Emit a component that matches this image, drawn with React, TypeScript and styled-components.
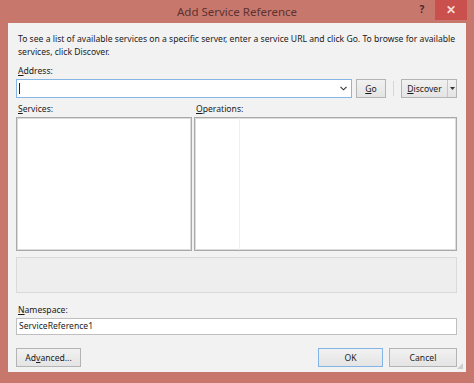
import { ReactElement } from 'react'
import styled, { createGlobalStyle } from 'styled-components'

const Global = createGlobalStyle`
  html, body {
    margin: 0;
    padding: 0;
  }
  body {
    font-family: 'Noto Sans', 'Open Sans', sans-serif;
  }
`

const Window = styled.div`
  width: 474px;
  height: 383px;
  box-sizing: border-box;
  background-color: #c8776d;
  display: flex;
  flex-direction: column;
  padding: 0 8px 11px;
`

const TitleBar = styled.header`
  height: 23px;
  display: grid;
  grid-template-columns: 1fr auto 1fr;
  align-items: start;
`

const Title = styled.div`
  grid-column: 2;
  font-size: 11.5px;
  line-height: 23px;
  color: #5b3430;
`

const Controls = styled.div`
  grid-column: 3;
  justify-self: end;
  display: flex;
  align-items: flex-start;
  margin-right: -1px;
`

const HelpButton = styled.div`
  width: 26px;
  height: 18px;
  font-size: 10px;
  font-weight: bold;
  line-height: 18px;
  text-align: center;
  color: #4a2a26;
`

const CloseButton = styled.div`
  width: 32px;
  height: 20px;
  background-color: #c9504d;
  color: #f6dada;
  font-size: 12px;
  font-weight: bold;
  line-height: 19px;
  text-align: center;
`

const BodyWrap = styled.div`
  position: relative;
  flex: 1;
  display: flex;
  flex-direction: column;
`

const Body = styled.main`
  flex: 1;
  background-color: #f2f2f2;
  display: flex;
  flex-direction: column;
  padding: 0 9px 0 8px;
  font-size: 8.6px;
  color: #1a1a1a;
`

const Intro = styled.p`
  margin: 10px 0 0 2px;
  line-height: 12.5px;
`

const Label = styled.div<{ $top: number }>`
  margin: ${({ $top }) => $top}px 0 0 2px;
  height: 11px;
  line-height: 11px;
`

const AddressRow = styled.div`
  margin-top: 2px;
  height: 19px;
  display: flex;
  align-items: stretch;
`

const Combo = styled.div`
  flex: 1;
  box-sizing: border-box;
  border: 1px solid #86b6e6;
  background: #fff;
  display: flex;
  align-items: center;
  justify-content: space-between;
  padding: 0 4px 0 2px;
`

const Caret = styled.span`
  width: 1px;
  height: 11px;
  background: #222;
`

const Chevron = styled.svg`
  width: 7px;
  height: 5px;
`

const Button = styled.div<{ $width: number; $focused?: boolean }>`
  width: ${({ $width }) => $width}px;
  box-sizing: border-box;
  border: 1px solid ${({ $focused }) => ($focused ? '#82b4e6' : '#b4b4b4')};
  background: linear-gradient(#f1f1f1, #e4e4e4);
  display: flex;
  align-items: center;
  justify-content: center;
`

const GoButton = styled(Button)`
  margin-left: 4px;
`

const Separator = styled.div`
  width: 1px;
  margin: 2px 7px;
  background: #d6d6d6;
`

const SplitButton = styled.div`
  width: 56px;
  box-sizing: border-box;
  border: 1px solid #b4b4b4;
  background: linear-gradient(#f1f1f1, #e4e4e4);
  display: flex;
`

const SplitMain = styled.div`
  flex: 1;
  display: flex;
  align-items: center;
  justify-content: center;
  border-right: 1px solid #c6c6c6;
`

const SplitArrow = styled.div`
  width: 8px;
  display: flex;
  align-items: center;
  justify-content: center;
`

const LabelRow = styled.div`
  display: grid;
  grid-template-columns: 178px 1fr;
  margin: 6px 0 0 2px;
  height: 11px;
  line-height: 11px;
`

const Lists = styled.div`
  margin-top: 2px;
  height: 134px;
  display: grid;
  grid-template-columns: 176px 1fr;
  gap: 2px;
`

const ListBox = styled.div`
  box-sizing: border-box;
  border: 1px solid #a9a9a9;
  box-shadow: inset 0 0 0 1px #dcdcdc;
  background: #fff;
  height: 100%;
`

const OpsBox = styled(ListBox)`
  display: grid;
  grid-template-columns: 45px 1fr;
`

const OpsDivider = styled.div`
  border-right: 1px solid #f0f0f0;
`

const Status = styled.div`
  margin-top: 6px;
  height: 36px;
  box-sizing: border-box;
  border: 1px solid #dadada;
  background: #eeeeee;
`

const TextBox = styled.div`
  margin-top: 2px;
  height: 17px;
  box-sizing: border-box;
  border: 1px solid #bfbfbf;
  background: #fff;
  padding-left: 2px;
  line-height: 15px;
`

const Footer = styled.div`
  margin-top: 13px;
  height: 19px;
  display: flex;
  gap: 6px;
`

const Spacer = styled.div`
  flex: 1;
`

const Grip = styled.div`
  position: absolute;
  right: 3px;
  bottom: 3px;
  width: 6px;
  height: 6px;
  background: radial-gradient(circle, #bbb 0.6px, transparent 0.9px) 0 0 / 2px 2px;
  clip-path: polygon(100% 0, 100% 100%, 0 100%);
`

const U = styled.span`
  text-decoration: underline;
  text-underline-offset: 1px;
`

export default function App(): ReactElement {
  return (
    <>
      <Global />
      <Window>
        <TitleBar>
          <Title>Add Service Reference</Title>
          <Controls>
            <HelpButton>?</HelpButton>
            <CloseButton>✕</CloseButton>
          </Controls>
        </TitleBar>
        <BodyWrap>
          <Body>
            <Intro>
              To see a list of available services on a specific server, enter a service URL and click Go. To browse for available
              services, click Discover.
            </Intro>
            <Label $top={8}>
              <U>A</U>ddress:
            </Label>
            <AddressRow>
              <Combo>
                <Caret />
                <Chevron viewBox="0 0 7 5">
                  <path d="M0.5 0.8 L3.5 3.8 L6.5 0.8" fill="none" stroke="#333" strokeWidth="1.1" />
                </Chevron>
              </Combo>
              <GoButton $width={30}>
                <U>G</U>o
              </GoButton>
              <Separator />
              <SplitButton>
                <SplitMain>
                  <U>D</U>iscover
                </SplitMain>
                <SplitArrow>
                  <svg width="5" height="3" viewBox="0 0 5 3">
                    <path d="M0 0 H5 L2.5 3 Z" fill="#333" />
                  </svg>
                </SplitArrow>
              </SplitButton>
            </AddressRow>
            <LabelRow>
              <div>
                <U>S</U>ervices:
              </div>
              <div>
                <U>O</U>perations:
              </div>
            </LabelRow>
            <Lists>
              <ListBox />
              <OpsBox>
                <OpsDivider />
                <div />
              </OpsBox>
            </Lists>
            <Status />
            <Label $top={12}>
              <U>N</U>amespace:
            </Label>
            <TextBox>ServiceReference1</TextBox>
            <Footer>
              <Button $width={65}>
                Ad<U>v</U>anced...
              </Button>
              <Spacer />
              <Button $width={65} $focused>
                OK
              </Button>
              <Button $width={68}>Cancel</Button>
            </Footer>
          </Body>
          <Grip />
        </BodyWrap>
      </Window>
    </>
  )
}
